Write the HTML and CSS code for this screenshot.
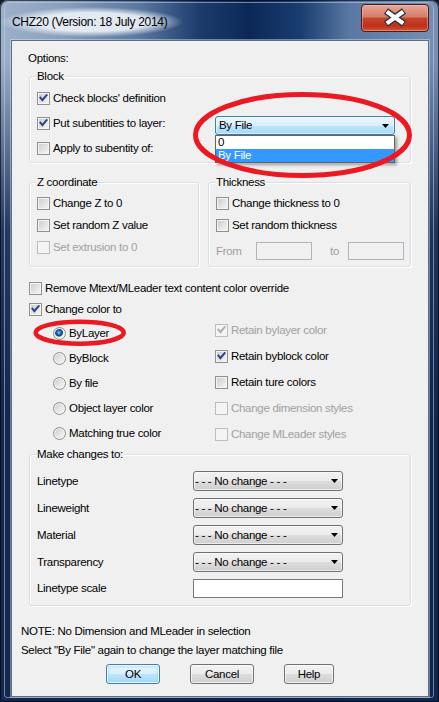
FILE: index.html
```html
<!DOCTYPE html>
<html>
<head>
<meta charset="utf-8">
<title>CHZ20</title>
<link rel="stylesheet" href="styles.css">
</head>
<body>
<div class="window">
  <div class="titlebar">
    <span class="title">CHZ20 (Version: 18 July 2014)</span>
    <div class="close">
      <svg width="66" height="26" viewBox="0 0 66 26">
        <path d="M24 6 L42 19 M42 6 L24 19" stroke="#2f3540" stroke-width="7" fill="none"/>
        <path d="M24.8 6.6 L41.2 18.4 M41.2 6.6 L24.8 18.4" stroke="#ffffff" stroke-width="4.2" fill="none"/>
      </svg>
    </div>
  </div>
  <div class="client">
    <div class="options-label">Options:</div>

    <div class="group block">
      <div class="group-title">Block</div>
      <div class="row"><span class="cb"><svg viewBox="0 0 11 11"><path class="tick" d="M1 4.6 L2.6 3.3 L4.3 5.6 L8.6 0.8 L10 2 L4.4 8.7 Z"/></svg></span><span>Check blocks' definition</span></div>
      <div class="row"><span class="cb"><svg viewBox="0 0 11 11"><path class="tick" d="M1 4.6 L2.6 3.3 L4.3 5.6 L8.6 0.8 L10 2 L4.4 8.7 Z"/></svg></span><span>Put subentities to layer:</span>
        <div class="combo hot">
          <span>By File</span>
          <svg class="arrow" width="7" height="4" viewBox="0 0 7 4"><polygon points="0,0 7,0 3.5,4"/></svg>
          <div class="droplist">
            <div class="item">0</div>
            <div class="item sel">By File</div>
          </div>
        </div>
      </div>
      <div class="row"><span class="cb"></span><span>Apply to subentity of:</span></div>
    </div>

    <div class="zrow">
      <div class="group zgroup">
        <div class="group-title">Z coordinate</div>
        <div class="row"><span class="cb"></span><span>Change Z to 0</span></div>
        <div class="row"><span class="cb"></span><span>Set random Z value</span></div>
        <div class="row dis"><span class="cb"></span><span>Set extrusion to 0</span></div>
      </div>
      <div class="group tgroup">
        <div class="group-title">Thickness</div>
        <div class="row"><span class="cb"></span><span>Change thickness to 0</span></div>
        <div class="row"><span class="cb"></span><span>Set random thickness</span></div>
        <div class="row from-row dis"><span class="from-label">From</span><span class="dinput"></span><span class="to-label">to</span><span class="dinput"></span></div>
      </div>
    </div>

    <div class="row line remove"><span class="cb"></span><span>Remove Mtext/MLeader text content color override</span></div>
    <div class="row line change"><span class="cb"><svg viewBox="0 0 11 11"><path class="tick" d="M1 4.6 L2.6 3.3 L4.3 5.6 L8.6 0.8 L10 2 L4.4 8.7 Z"/></svg></span><span>Change color to</span></div>

    <div class="colors">
      <div class="col radios">
        <div class="row"><span class="rb on"></span><span>ByLayer</span></div>
        <div class="row"><span class="rb"></span><span>ByBlock</span></div>
        <div class="row"><span class="rb"></span><span>By file</span></div>
        <div class="row"><span class="rb"></span><span>Object layer color</span></div>
        <div class="row"><span class="rb"></span><span>Matching true color</span></div>
      </div>
      <div class="col checks">
        <div class="row dis"><span class="cb"><svg viewBox="0 0 11 11"><path class="tick" d="M1 4.6 L2.6 3.3 L4.3 5.6 L8.6 0.8 L10 2 L4.4 8.7 Z"/></svg></span><span>Retain bylayer color</span></div>
        <div class="row"><span class="cb"><svg viewBox="0 0 11 11"><path class="tick" d="M1 4.6 L2.6 3.3 L4.3 5.6 L8.6 0.8 L10 2 L4.4 8.7 Z"/></svg></span><span>Retain byblock color</span></div>
        <div class="row"><span class="cb"></span><span>Retain ture colors</span></div>
        <div class="row dis"><span class="cb"></span><span>Change dimension styles</span></div>
        <div class="row dis"><span class="cb"></span><span>Change MLeader styles</span></div>
      </div>
    </div>

    <div class="group make">
      <div class="group-title">Make changes to:</div>
      <span class="mlabel">Linetype</span>
      <div class="combo"><span>- - - No change - - -</span><svg class="arrow" width="7" height="4" viewBox="0 0 7 4"><polygon points="0,0 7,0 3.5,4"/></svg></div>
      <span class="mlabel">Lineweight</span>
      <div class="combo"><span>- - - No change - - -</span><svg class="arrow" width="7" height="4" viewBox="0 0 7 4"><polygon points="0,0 7,0 3.5,4"/></svg></div>
      <span class="mlabel">Material</span>
      <div class="combo"><span>- - - No change - - -</span><svg class="arrow" width="7" height="4" viewBox="0 0 7 4"><polygon points="0,0 7,0 3.5,4"/></svg></div>
      <span class="mlabel">Transparency</span>
      <div class="combo"><span>- - - No change - - -</span><svg class="arrow" width="7" height="4" viewBox="0 0 7 4"><polygon points="0,0 7,0 3.5,4"/></svg></div>
      <span class="mlabel">Linetype scale</span>
      <div class="tinput"></div>
    </div>

    <div class="notes">
      <div>NOTE: No Dimension and MLeader in selection</div>
      <div>Select "By File" again to change the layer matching file</div>
    </div>

    <div class="buttons">
      <div class="btn default ok">OK</div>
      <div class="btn cancel">Cancel</div>
      <div class="btn help">Help</div>
    </div>

    <svg class="marks" width="416" height="655" viewBox="0 0 416 655">
      <ellipse cx="290.5" cy="94" rx="107" ry="40.5" fill="none" stroke="#ea1922" stroke-width="5"/>
      <ellipse cx="67.7" cy="291.7" rx="44" ry="11" fill="none" stroke="#ea1922" stroke-width="4.5"/>
    </svg>
  </div>
</div>
</body>
</html>
```

FILE: styles.css
```css
* { box-sizing: border-box; }

html, body {
  margin: 0;
  padding: 0;
  background: #161c26;
}

body {
  width: 439px;
  height: 702px;
  overflow: hidden;
  font-family: "Liberation Sans", Arial, sans-serif;
  font-size: 11.5px;
  letter-spacing: -0.3px;
  color: #000;
}

.window {
  position: relative;
  width: 439px;
  height: 702px;
  border-radius: 8px 8px 2px 2px;
  overflow: hidden;
  display: flex;
  flex-direction: column;
  background:
    linear-gradient(180deg, rgba(13, 36, 78, 0) 0px, rgba(13, 36, 78, 0) 60px, rgba(13, 36, 78, 0.85) 230px, rgba(11, 32, 72, 0.95) 420px),
    linear-gradient(90deg, #9cb0c9 0px, #8aa0be 60px, #5a77a0 140px, #1c3b6c 200px, #0b2857 250px, #193d70 300px, #5a78a2 350px, #7790b4 439px);
  box-shadow: inset 0 0 0 1px rgba(0, 0, 0, 0.6);
}

.window::after {
  content: "";
  position: absolute;
  left: 4px;
  right: 5px;
  top: 2px;
  bottom: 4px;
  border: 1px solid rgba(190, 210, 235, 0.55);
  border-radius: 7px 7px 3px 3px;
  pointer-events: none;
}

/* title bar */
.titlebar {
  flex: none;
  height: 40px;
  display: flex;
  align-items: flex-start;
}

.title {
  margin-top: 7px;
  padding: 8px 16px 8px 12px;
  font-family: "Liberation Sans", Arial, sans-serif;
  font-size: 12px;
  line-height: 14px;
  letter-spacing: -0.3px;
  white-space: nowrap;
  background: radial-gradient(farthest-side, rgba(232, 238, 245, 0.95) 62%, rgba(232, 238, 245, 0) 100%);
}

.close {
  margin: 4px 10px 0 auto;
  width: 68px;
  height: 28px;
  border: 1px solid #4c1b16;
  border-radius: 4px;
  background: linear-gradient(180deg, #e6a899 0%, #d67c69 45%, #c2452c 52%, #bf301a 80%, #d4532f 100%);
  box-shadow: inset 0 0 0 1px rgba(255, 200, 190, 0.45);
}

.close svg { display: block; }

/* client area */
.client {
  position: relative;
  flex: none;
  margin: 0 10px 0 11px;
  height: 657px;
  background: #f0f0f0;
  border: 1px solid #5f6d80;
  box-shadow: 0 0 0 1px rgba(220, 232, 245, 0.45);
}

.options-label {
  margin: 11px 0 0 16px;
  line-height: 13px;
}

.group {
  position: relative;
  border: 1px solid #d5dfe5;
  border-radius: 3px;
  box-shadow: inset 1px 1px 0 #fff, 1px 1px 0 #fff;
}

.group-title {
  position: absolute;
  top: -7px;
  left: 6px;
  padding: 0 1px;
  line-height: 13px;
  background: #f0f0f0;
  white-space: nowrap;
}

.row {
  display: flex;
  align-items: center;
  height: 13px;
  line-height: 13px;
  white-space: nowrap;
}

.row.dis { color: #a0a0a0; }

/* checkbox */
.cb {
  flex: none;
  width: 13px;
  height: 13px;
  margin-right: 3px;
  border: 1px solid #8e8f8f;
  background: linear-gradient(135deg, #c9c9c9 0%, #e4e4e4 55%, #f7f7f7 100%);
  box-shadow: inset 0 0 0 1px #f4f4f4;
}

.cb svg {
  display: block;
  width: 11px;
  height: 11px;
}

.tick { fill: #2a4686; }

.row.dis .cb {
  border-color: #bdbdbd;
  background: #f4f4f4;
  box-shadow: none;
}

.row.dis .tick { fill: #b0b0b0; }

/* radio */
.rb {
  flex: none;
  width: 13px;
  height: 13px;
  margin-right: 3px;
  border-radius: 50%;
  border: 1px solid #8e8f8f;
  background: linear-gradient(135deg, #c9c9c9 0%, #e6e6e6 55%, #f8f8f8 100%);
  box-shadow: inset 0 0 0 1px #f4f4f4;
}

.rb.on {
  background:
    radial-gradient(circle at 45% 42%, #a6e2ff 0, #3a8fd0 1.2px, #174a86 3px, #1f3f6e 3.6px, rgba(31, 63, 110, 0) 4.3px),
    linear-gradient(135deg, #c9c9c9 0%, #e6e6e6 55%, #f8f8f8 100%);
}

/* block group */
.block {
  margin: 11px 0 0 17px;
  width: 382px;
  padding: 15px 15px 7px 7px;
  display: flex;
  flex-direction: column;
  gap: 12px;
}

/* combos */
.combo {
  position: relative;
  display: flex;
  align-items: center;
  justify-content: space-between;
  height: 20px;
  width: 150px;
  padding: 0 4px 0 1px;
  border: 1px solid #707070;
  border-radius: 3px;
  background: linear-gradient(180deg, #f2f2f2 0%, #ebebeb 50%, #dddddd 51%, #cfcfcf 100%);
  box-shadow: inset 0 0 0 1px rgba(255, 255, 255, 0.6);
  white-space: nowrap;
}

.combo .arrow { flex: none; display: block; }
.combo .arrow polygon { fill: #000; }

.combo.hot {
  align-self: flex-start;
  margin: -1px 0 0 auto;
  width: 180px;
  height: 19px;
  padding: 0 5px 0 3px;
  border-color: #3c7fb1;
  background: linear-gradient(180deg, #eaf6fd 0%, #d9f0fc 50%, #bee6fd 51%, #a7d9f5 100%);
  box-shadow: inset 0 0 0 1px rgba(255, 255, 255, 0.5);
}

.droplist {
  position: absolute;
  top: calc(100% + 1px);
  left: -1px;
  width: 180px;
  border: 1px solid #646464;
  background: #fff;
  box-shadow: 2px 2px 3px rgba(0, 0, 0, 0.35);
}

.item {
  height: 13px;
  line-height: 13px;
  padding-left: 2px;
}

.item.sel {
  background: #3399ff;
  color: #fff;
}

/* Z / thickness */
.zrow {
  display: flex;
  gap: 9px;
  margin: 19px 0 0 17px;
}

.zgroup, .tgroup {
  height: 85px;
  padding: 14px 0 0 7px;
  display: flex;
  flex-direction: column;
  gap: 9px;
}

.zgroup { width: 170px; }
.tgroup { width: 203px; }

.from-row {
  height: 18px;
  margin-top: 1px;
}

.from-label { width: 40px; }

.to-label {
  width: 18px;
  margin-left: 18px;
}

.dinput {
  width: 56px;
  height: 18px;
  border: 1px solid #afb4b8;
  background: #f0f0f0;
}

/* lines */
.line { margin-left: 17px; }
.remove { margin-top: 15px; }
.change { margin-top: 8px; }

.colors {
  display: flex;
  margin-left: 41px;
}

.col {
  display: flex;
  flex-direction: column;
}

.radios {
  width: 162px;
  padding-top: 11px;
  gap: 12px;
}

.checks {
  padding-top: 8px;
  gap: 13px;
}

/* make changes */
.make {
  margin: 13px 0 0 17px;
  width: 382px;
  padding: 16px 7px 7px 7px;
  display: grid;
  grid-template-columns: 156px 150px;
  row-gap: 7px;
  align-items: center;
}

.mlabel {
  line-height: 13px;
  white-space: nowrap;
}

.tinput {
  width: 150px;
  height: 19px;
  border: 1px solid #7a7a7a;
  background: #fff;
}

/* notes */
.notes {
  margin: 16px 0 0 9px;
  line-height: 19px;
  white-space: nowrap;
}

/* buttons */
.buttons {
  display: flex;
  margin-top: 4px;
  padding-left: 94px;
}

.btn {
  height: 20px;
  line-height: 18px;
  text-align: center;
  border: 1px solid #707070;
  border-radius: 3px;
  background: linear-gradient(180deg, #f2f2f2 0%, #ebebeb 50%, #dddddd 51%, #cfcfcf 100%);
  box-shadow: inset 0 0 0 1px rgba(255, 255, 255, 0.7);
}

.btn.default {
  border-color: #3c7fb1;
  background: linear-gradient(180deg, #eaf6fd 0%, #d9f0fc 50%, #bee6fd 51%, #a7d9f5 100%);
  box-shadow: inset 0 0 0 1px rgba(255, 255, 255, 0.8), inset 0 0 2px 2px rgba(140, 215, 250, 0.6);
}

.ok { width: 54px; }
.cancel { width: 64px; margin-left: 30px; }
.help { width: 50px; margin-left: 30px; }

/* annotation ellipses drawn over the dialog */
.marks {
  position: absolute;
  left: 0;
  top: 0;
  pointer-events: none;
}
```
